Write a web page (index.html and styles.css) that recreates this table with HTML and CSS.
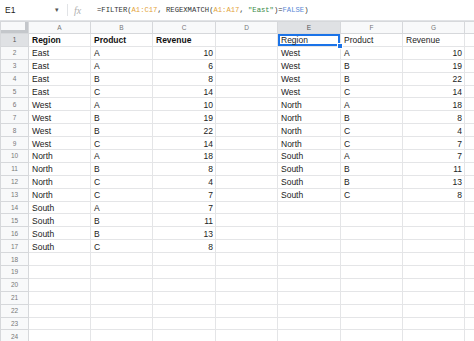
FILE: index.html
```html
<!DOCTYPE html>
<html lang="en">
<head>
    <meta charset="UTF-8">
    <meta name="viewport" content="width=device-width, initial-scale=1.0">
    <title>FILTER with REGEXMATCH</title>
    <link rel="stylesheet" href="styles.css">
</head>
<body>
    <div class="formula-bar">
        <div class="name-box">
            <span class="cell-ref">E1</span>
            <span class="name-arrow">&#9662;</span>
        </div>
        <div class="fx">fx</div>
        <div class="formula">=FILTER(<span class="ref-a">A1:C17</span>, REGEXMATCH(<span class="ref-a">A1:A17</span>, <span class="str">"East"</span>)=<span class="bool">FALSE</span>)</div>
    </div>

    <table class="sheet">
        <colgroup>
            <col class="c-row">
            <col class="c-std">
            <col class="c-std">
            <col class="c-wide">
            <col class="c-std">
            <col class="c-wide">
            <col class="c-std">
            <col class="c-std">
            <col class="c-rest">
        </colgroup>
        <tr class="col-heads">
            <th class="corner"></th>
            <th>A</th><th>B</th><th>C</th><th>D</th><th class="active">E</th><th>F</th><th>G</th><th></th>
        </tr>
        <tr><th class="active">1</th><td class="b">Region</td><td class="b">Product</td><td class="b">Revenue</td><td></td><td class="selected">Region</td><td>Product</td><td>Revenue</td><td></td></tr>
        <tr><th>2</th><td>East</td><td>A</td><td class="n">10</td><td></td><td>West</td><td>A</td><td class="n">10</td><td></td></tr>
        <tr><th>3</th><td>East</td><td>A</td><td class="n">6</td><td></td><td>West</td><td>B</td><td class="n">19</td><td></td></tr>
        <tr><th>4</th><td>East</td><td>B</td><td class="n">8</td><td></td><td>West</td><td>B</td><td class="n">22</td><td></td></tr>
        <tr><th>5</th><td>East</td><td>C</td><td class="n">14</td><td></td><td>West</td><td>C</td><td class="n">14</td><td></td></tr>
        <tr><th>6</th><td>West</td><td>A</td><td class="n">10</td><td></td><td>North</td><td>A</td><td class="n">18</td><td></td></tr>
        <tr><th>7</th><td>West</td><td>B</td><td class="n">19</td><td></td><td>North</td><td>B</td><td class="n">8</td><td></td></tr>
        <tr><th>8</th><td>West</td><td>B</td><td class="n">22</td><td></td><td>North</td><td>C</td><td class="n">4</td><td></td></tr>
        <tr><th>9</th><td>West</td><td>C</td><td class="n">14</td><td></td><td>North</td><td>C</td><td class="n">7</td><td></td></tr>
        <tr><th>10</th><td>North</td><td>A</td><td class="n">18</td><td></td><td>South</td><td>A</td><td class="n">7</td><td></td></tr>
        <tr><th>11</th><td>North</td><td>B</td><td class="n">8</td><td></td><td>South</td><td>B</td><td class="n">11</td><td></td></tr>
        <tr><th>12</th><td>North</td><td>C</td><td class="n">4</td><td></td><td>South</td><td>B</td><td class="n">13</td><td></td></tr>
        <tr><th>13</th><td>North</td><td>C</td><td class="n">7</td><td></td><td>South</td><td>C</td><td class="n">8</td><td></td></tr>
        <tr><th>14</th><td>South</td><td>A</td><td class="n">7</td><td></td><td></td><td></td><td></td><td></td></tr>
        <tr><th>15</th><td>South</td><td>B</td><td class="n">11</td><td></td><td></td><td></td><td></td><td></td></tr>
        <tr><th>16</th><td>South</td><td>B</td><td class="n">13</td><td></td><td></td><td></td><td></td><td></td></tr>
        <tr><th>17</th><td>South</td><td>C</td><td class="n">8</td><td></td><td></td><td></td><td></td><td></td></tr>
        <tr><th>18</th><td></td><td></td><td></td><td></td><td></td><td></td><td></td><td></td></tr>
        <tr><th>19</th><td></td><td></td><td></td><td></td><td></td><td></td><td></td><td></td></tr>
        <tr><th>20</th><td></td><td></td><td></td><td></td><td></td><td></td><td></td><td></td></tr>
        <tr><th>21</th><td></td><td></td><td></td><td></td><td></td><td></td><td></td><td></td></tr>
        <tr><th>22</th><td></td><td></td><td></td><td></td><td></td><td></td><td></td><td></td></tr>
        <tr><th>23</th><td></td><td></td><td></td><td></td><td></td><td></td><td></td><td></td></tr>
        <tr><th>24</th><td></td><td></td><td></td><td></td><td></td><td></td><td></td><td></td></tr>
    </table>
</body>
</html>
```

FILE: styles.css
```css
body {
    margin: 0;
    background: #fff;
    font-family: "Liberation Sans", Arial, sans-serif;
    color: #222;
    overflow: hidden;
}

/* formula bar */
.formula-bar {
    display: flex;
    align-items: center;
    height: 21px;
    box-sizing: border-box;
    border-bottom: 1px solid #e1e3e6;
}

.name-box {
    display: flex;
    align-items: center;
    justify-content: space-between;
    width: 68px;
    padding: 0 8px 0 5px;
    box-sizing: border-box;
    border-right: 1px solid #e1e3e6;
    height: 12px;
}

.cell-ref {
    font-size: 8.5px;
    color: #222;
}

.name-arrow {
    font-size: 7px;
    color: #555;
}

.fx {
    width: 29px;
    padding-left: 6px;
    box-sizing: border-box;
    font-family: "Liberation Serif", serif;
    font-style: italic;
    font-size: 10px;
    color: #b0b0b0;
}

.formula {
    font-family: "Liberation Mono", monospace;
    font-size: 7.2px;
    color: #333;
    white-space: nowrap;
}

.ref-a {
    color: #e3a33a;
}

.str {
    color: #3a8a48;
}

.bool {
    color: #5b8ad6;
}

/* grid */
.sheet {
    border-collapse: collapse;
    table-layout: fixed;
    width: 484px;
}

.c-row { width: 28px; }
.c-std { width: 62px; }
.c-wide { width: 63px; }
.c-rest { width: 20px; }

.sheet tr {
    height: 12.9px;
}

.sheet tr.col-heads {
    height: 12px;
}

.sheet th {
    background: #f8f9fa;
    color: #777;
    font-weight: normal;
    font-size: 6.5px;
    text-align: center;
    padding: 0;
    border: 1px solid #d6d8db;
}

.sheet th.active {
    background: #dfe1e4;
    color: #555;
}

.sheet th.corner {
    background: #f8f9fa;
    box-shadow: inset -3px -3px 0 #c4c7cb;
}

.sheet td {
    font-size: 8.5px;
    line-height: 1;
    padding: 0 2px 1px 3px;
    vertical-align: bottom;
    white-space: nowrap;
    overflow: hidden;
    border: 1px solid #e4e5e7;
}

.sheet td.b {
    font-weight: bold;
    color: #111;
}

.sheet td.n {
    text-align: right;
}

.sheet td.selected {
    position: relative;
    overflow: visible;
    box-shadow: inset 0 0 0 2px #1a73e8;
}

.sheet td.selected::after {
    content: "";
    position: absolute;
    right: -3px;
    bottom: -3px;
    width: 4px;
    height: 4px;
    background: #1a73e8;
    border: 1px solid #fff;
}
```
